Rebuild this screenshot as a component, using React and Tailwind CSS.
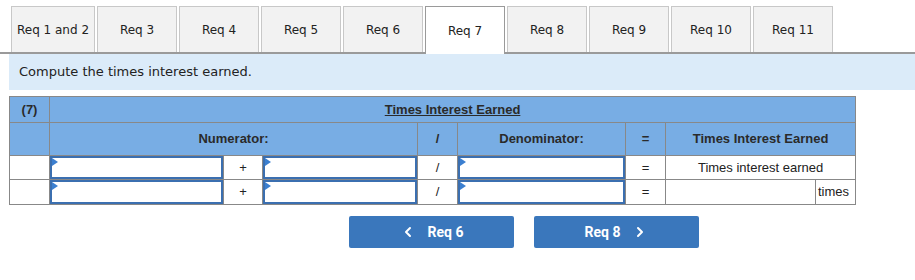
import { ChevronLeft, ChevronRight } from 'lucide-react';

const TABS = ['Req 1 and 2', 'Req 3', 'Req 4', 'Req 5', 'Req 6', 'Req 7', 'Req 8', 'Req 9', 'Req 10', 'Req 11'];
const ACTIVE = 'Req 7';

function Field() {
    return (
        <div className="relative h-full w-full border-2 border-[#3b6fb0] bg-white">
            <span className="absolute left-0 top-0 h-0 w-0 border-y-[4px] border-l-[6px] border-y-transparent border-l-[#3b7fd0]" />
        </div>
    );
}

export default function App() {
    return (
        <div className="h-[280px] w-[915px] bg-white pt-[6px] font-['Liberation_Sans',Arial,sans-serif] text-[#222]">
            {/* Tabs */}
            <div className="flex h-[48px] items-end gap-[2px] border-b-2 border-[#9a9a9a] pl-[11px] font-['DejaVu_Sans',Verdana,sans-serif] text-[12px]">
                {TABS.map((t, i) => (
                    <div
                        key={t}
                        className={[
                            'flex items-center justify-center',
                            i === 0 ? 'w-[84px]' : 'w-[80px]',
                            t === ACTIVE
                                ? 'relative -mb-[2px] h-[48px] border border-b-0 border-[#9a9a9a] bg-white'
                                : 'h-[46px] border border-b-0 border-[#c8c8c8] bg-[#f2f2f2]',
                        ].join(' ')}
                    >
                        {t}
                    </div>
                ))}
            </div>

            {/* Instructions */}
            <div className="ml-[9px] flex h-[36px] items-center bg-[#dbebf9] pl-[10px] font-['DejaVu_Sans',Verdana,sans-serif] text-[13px]">
                Compute the times interest earned.
            </div>

            {/* Table */}
            <table className="ml-[9px] mt-[6px] w-[846px] table-fixed border-collapse text-[13px] text-[#222]">
                <colgroup>
                    <col className="w-[40px]" />
                    <col className="w-[174px]" />
                    <col className="w-[39px]" />
                    <col className="w-[155px]" />
                    <col className="w-[40px]" />
                    <col className="w-[168px]" />
                    <col className="w-[40px]" />
                    <col className="w-[150px]" />
                    <col className="w-[40px]" />
                </colgroup>
                <thead className="bg-[#78ade4] font-bold text-[#2a2a2a]">
                    <tr className="h-[26px]">
                        <th className="border border-[#888] text-center">(7)</th>
                        <th colSpan={8} className="border border-[#888] text-center underline">Times Interest Earned</th>
                    </tr>
                    <tr className="h-[33px]">
                        <th className="border border-[#888]" />
                        <th colSpan={3} className="border border-[#888] text-center">Numerator:</th>
                        <th className="border border-[#888] text-center">/</th>
                        <th className="border border-[#888] text-center">Denominator:</th>
                        <th className="border border-[#888] text-center">=</th>
                        <th colSpan={2} className="border border-[#888] text-center">Times Interest Earned</th>
                    </tr>
                </thead>
                <tbody>
                    <tr className="h-[24px]">
                        <td className="border border-[#888]" />
                        <td className="h-[24px] border border-[#888] p-0"><Field /></td>
                        <td className="border border-[#888] text-center">+</td>
                        <td className="h-[24px] border border-[#888] p-0"><Field /></td>
                        <td className="border border-[#888] text-center">/</td>
                        <td className="h-[24px] border border-[#888] p-0"><Field /></td>
                        <td className="border border-[#888] text-center">=</td>
                        <td colSpan={2} className="border border-[#888] text-center">Times interest earned</td>
                    </tr>
                    <tr className="h-[25px]">
                        <td className="border border-[#888]" />
                        <td className="h-[25px] border border-[#888] p-0"><Field /></td>
                        <td className="border border-[#888] text-center">+</td>
                        <td className="h-[25px] border border-[#888] p-0"><Field /></td>
                        <td className="border border-[#888] text-center">/</td>
                        <td className="h-[25px] border border-[#888] p-0"><Field /></td>
                        <td className="border border-[#888] text-center">=</td>
                        <td className="border border-[#888]" />
                        <td className="border border-[#888] pl-[2px] text-left">times</td>
                    </tr>
                </tbody>
            </table>

            {/* Navigation */}
            <div className="mt-[11px] flex gap-[20px] pl-[349px] font-['Roboto',sans-serif] text-[14px] font-bold text-white">
                <button className="flex h-[32px] w-[165px] items-center justify-center gap-[12px] rounded-[2px] bg-[#3a77bc]">
                    <ChevronLeft size={16} strokeWidth={3} />
                    Req 6
                </button>
                <button className="flex h-[32px] w-[165px] items-center justify-center gap-[12px] rounded-[2px] bg-[#3a77bc]">
                    Req 8
                    <ChevronRight size={16} strokeWidth={3} />
                </button>
            </div>
        </div>
    );
}
